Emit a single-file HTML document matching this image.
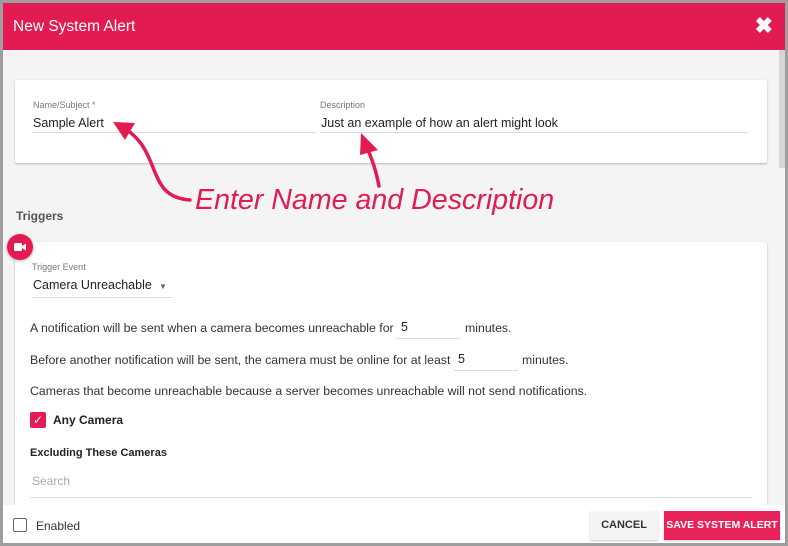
<!DOCTYPE html>
<html><head><meta charset="utf-8"><style>
*{box-sizing:border-box;margin:0;padding:0}
body{width:788px;height:546px;background:#9e9e9e;font-family:"Liberation Sans",sans-serif;position:relative;overflow:hidden;color:#333}
.dlg{position:absolute;left:3px;top:3px;width:782px;height:540px;background:#f4f4f4;overflow:hidden}
.hdr{position:absolute;left:0;top:0;width:782px;height:47px;background:#e21c52;color:#fff;font-size:15.5px;padding:15px 0 0 10px}
.x{position:absolute;right:12px;top:10px;font-size:22px;font-weight:bold;color:#fff}
.sb{position:absolute;left:776px;top:47px;width:6px;height:118px;background:#d6d6d6}
.card{position:absolute;background:#fff;box-shadow:0 1px 2px rgba(0,0,0,.25);border-radius:2px}
.a{position:absolute;white-space:nowrap}
.lbl{font-size:9px;color:#777}
.val{font-size:12.5px;color:#222}
.ln{position:absolute;height:1px;background:#ddd}
.t{font-size:12.3px;color:#333}
.foot{position:absolute;left:0;top:502px;width:782px;height:38px;background:#fff}
</style></head><body>
<div class="dlg">
<div class="hdr">New System Alert<span class="x">✖</span></div>
<div class="sb"></div>
<div class="card" style="left:12px;top:77px;width:752px;height:83px">
<div class="a lbl" style="left:18px;top:20px">Name/Subject *</div>
<div class="a val" style="left:18px;top:36px">Sample Alert</div>
<div class="ln" style="left:17px;top:52px;width:284px"></div>
<div class="a lbl" style="left:305px;top:20px">Description</div>
<div class="a val" style="left:306px;top:36px">Just an example of how an alert might look</div>
<div class="ln" style="left:305px;top:52px;width:429px"></div>
</div>
<div class="a" style="left:13px;top:206px;font-size:12px;font-weight:bold;color:#555">Triggers</div>
<div class="card" style="left:12px;top:239px;width:752px;height:280px">
<div class="a lbl" style="left:17px;top:20px">Trigger Event</div>
<div class="a val" style="left:18px;top:36px">Camera Unreachable</div>
<div class="a" style="left:144px;top:40px;font-size:8px;color:#666">▼</div>
<div class="ln" style="left:17px;top:55px;width:141px"></div>
<div class="a t" style="left:15px;top:79px">A notification will be sent when a camera becomes unreachable for</div>
<div class="a val" style="left:386px;top:78px">5</div>
<div class="ln" style="left:381px;top:96px;width:64px"></div>
<div class="a t" style="left:450px;top:79px">minutes.</div>
<div class="a t" style="left:15px;top:111px">Before another notification will be sent, the camera must be online for at least</div>
<div class="a val" style="left:443px;top:110px">5</div>
<div class="ln" style="left:439px;top:128px;width:64px"></div>
<div class="a t" style="left:507px;top:111px">minutes.</div>
<div class="a t" style="left:15px;top:142px">Cameras that become unreachable because a server becomes unreachable will not send notifications.</div>
<div class="a" style="left:15px;top:170px;width:16px;height:16px;background:#e21c52;border-radius:2px;color:#fff;font-size:12px;text-align:center;line-height:16px">✓</div>
<div class="a" style="left:38px;top:171px;font-size:12px;font-weight:bold;color:#222">Any Camera</div>
<div class="a" style="left:15px;top:205px;font-size:11px;font-weight:bold;color:#222">Excluding These Cameras</div>
<div class="a" style="left:17px;top:232px;font-size:12px;color:#aaa">Search</div>
<div class="ln" style="left:15px;top:255px;width:722px"></div>
</div>
<div class="a" style="left:4px;top:231px;width:26px;height:26px;border-radius:50%;background:#e21c52;box-shadow:0 1px 3px rgba(0,0,0,.3)">
<svg width="26" height="26" viewBox="0 0 26 26"><rect x="7" y="9" width="8" height="8" rx="1.5" fill="#fff"/><path d="M15 12 L19 9.5 V16.5 L15 14Z" fill="#fff"/></svg></div>
<div class="foot">
<div class="a" style="left:10px;top:13px;width:14px;height:14px;border:1.5px solid #666;border-radius:2px"></div>
<div class="a" style="left:33px;top:14px;font-size:12px;color:#333">Enabled</div>
<div class="a" style="left:587px;top:6px;width:68px;height:29px;background:#f4f4f4;box-shadow:0 1px 2px rgba(0,0,0,.2);font-size:11px;font-weight:bold;text-align:center;line-height:29px;color:#333">CANCEL</div>
<div class="a" style="left:661px;top:6px;width:116px;height:29px;background:#e8235a;box-shadow:0 1px 2px rgba(0,0,0,.2);font-size:10.5px;font-weight:bold;text-align:center;line-height:29px;color:#fff">SAVE SYSTEM ALERT</div>
</div>
</div>
<svg class="a" style="left:0;top:0" width="788" height="546">
<path d="M190 200 C165 198 160 185 152 165 C146 150 140 138 124 128" fill="none" stroke="#e21c52" stroke-width="3.5" stroke-linecap="round"/>
<path d="M113 122 L135 123 L125 140Z" fill="#e21c52"/>
<path d="M379 186 C376 170 372 158 366 146" fill="none" stroke="#e21c52" stroke-width="3.5" stroke-linecap="round"/>
<path d="M361 133 L378 150 L360 155Z" fill="#e21c52"/>
</svg>
<div class="a" style="left:195px;top:184px;font-size:28.6px;font-style:italic;color:#e21c52">Enter Name and Description</div>
</body></html>
